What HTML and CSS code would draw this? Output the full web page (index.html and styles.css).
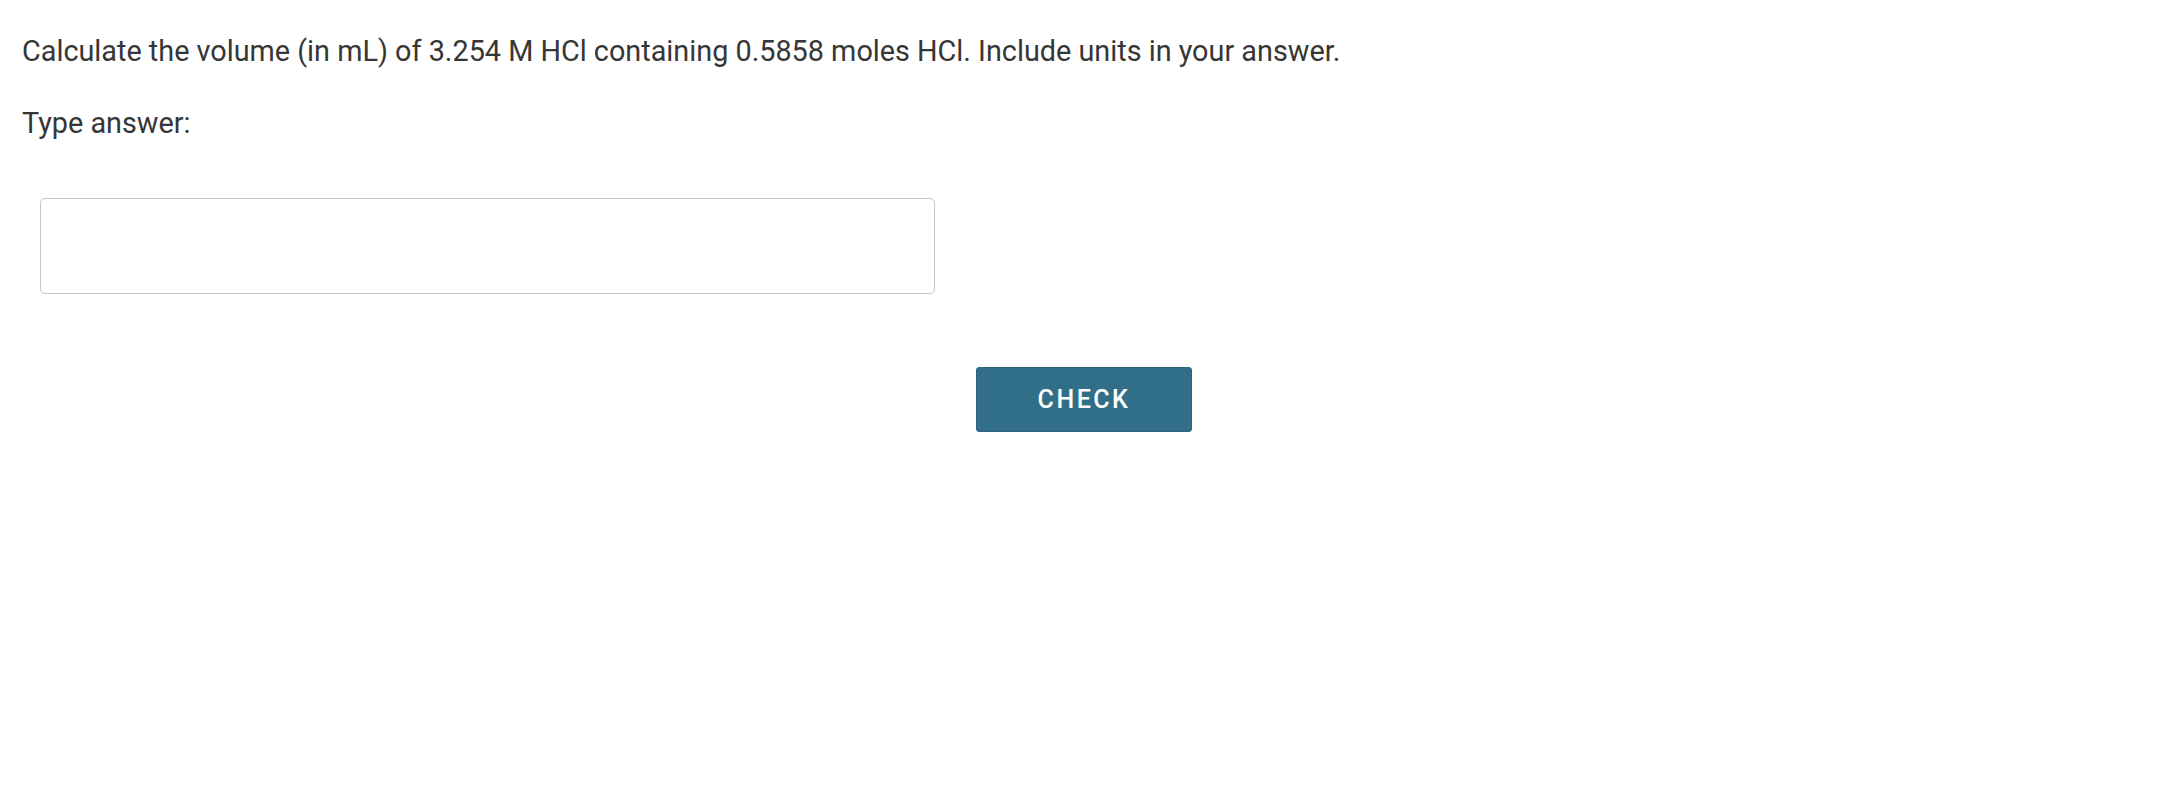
FILE: index.html
```html
<!DOCTYPE html>
<html lang="en">
<head>
<meta charset="utf-8">
<title>Question</title>
<link rel="stylesheet" href="styles.css">
</head>
<body>
<main class="question">
  <p class="prompt">Calculate the volume (in mL) of 3.254 M HCl containing 0.5858 moles HCl. Include units in your answer.</p>
  <p class="label">Type answer:</p>
  <div class="answer-row">
    <input class="answer" type="text" aria-label="Type answer">
  </div>
  <div class="actions">
    <button class="check" type="button">CHECK</button>
  </div>
</main>
</body>
</html>
```

FILE: styles.css
```css
html, body {
  margin: 0;
  padding: 0;
  background: #ffffff;
}

.question {
  font-family: Roboto, "Liberation Sans", Arial, sans-serif;
  color: #363636;
  padding: 31px 0 0 0;
}

.prompt,
.label {
  margin: 0;
  padding-left: 22px;
  font-size: 28.8px;
  line-height: 40px;
}

.label {
  margin-top: 32px;
}

.answer-row {
  margin-top: 55px;
  padding-left: 40px;
}

.answer {
  display: block;
  box-sizing: border-box;
  width: 895px;
  height: 96px;
  border: 1px solid #c6c6c6;
  border-radius: 5px;
  background: #ffffff;
  font-family: inherit;
  font-size: 28px;
  padding: 0 16px;
  outline: none;
}

.actions {
  display: flex;
  padding-left: 976px;
  margin-top: 73px;
}

.check {
  box-sizing: border-box;
  width: 216px;
  height: 65px;
  border: 1px solid #2b6580;
  border-radius: 3px;
  background: #316f88;
  color: #ffffff;
  font-family: Roboto, "Liberation Sans", Arial, sans-serif;
  font-size: 25px;
  font-weight: 500;
  letter-spacing: 2.5px;
  padding: 0;
  cursor: pointer;
}
```
